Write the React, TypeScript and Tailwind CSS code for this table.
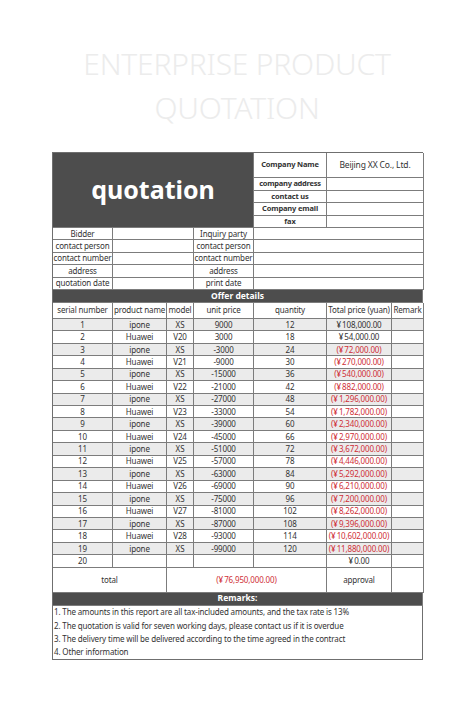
const font = { fontFamily: '"Noto Sans", "Open Sans", sans-serif' }

const rows = Array.from({ length: 19 }, (_, i) => {
  const n = i + 1
  const price = 9000 - 6000 * i
  const qty = 6 * (n + 1)
  return {
    n,
    product: n % 2 === 1 ? 'ipone' : 'Huawei',
    model: n % 2 === 1 ? 'XS' : `V${20 + (n / 2 - 1)}`,
    price,
    qty,
    total: price * qty,
  }
})

const money = (v: number) => {
  const s = '¥\u2009' + Math.abs(v).toLocaleString('en-US', { minimumFractionDigits: 2, maximumFractionDigits: 2 })
  return v < 0 ? `(${s})` : s
}

const Cell = ({ children, className = '' }: { children?: React.ReactNode; className?: string }) => (
  <div className={`flex items-center justify-center border-r border-b border-[#7c7c7c] whitespace-nowrap overflow-hidden ${className}`}>
    {children}
  </div>
)

export default function App() {
  return (
    <div className="w-[474px] h-[706px] bg-white text-[#333] overflow-hidden" style={font}>
      {/* Faded title */}
      <div className="pt-[42px] text-center text-[30px] leading-[44px] font-light text-[#ececec] tracking-[-0.2px]">
        <div>ENTERPRISE PRODUCT</div>
        <div>QUOTATION</div>
      </div>

      <div className="ml-[52px] mt-[22px] w-[371px] border-l border-t border-[#6f6f6f] text-[8px] leading-none tracking-[-0.15px]">
        {/* Company header */}
        <div className="grid grid-cols-[201px_73px_97px] grid-rows-[25px_12.5px_12.5px_12.5px_12.5px]">
          <div className="row-span-5 flex items-center justify-center bg-[#4d4d4d] border-r border-b border-[#7c7c7c] text-white font-bold text-[25px] tracking-normal pb-[2px]">
            quotation
          </div>
          <Cell className="font-bold text-[7.5px]">Company Name</Cell>
          <Cell className="text-[8.5px]">Beijing XX Co., Ltd.</Cell>
          <Cell className="font-bold text-[7.5px] tracking-[-0.25px]">company address</Cell>
          <Cell />
          <Cell className="font-bold text-[7.5px]">contact us</Cell>
          <Cell />
          <Cell className="font-bold text-[7.5px]">Company email</Cell>
          <Cell />
          <Cell className="font-bold text-[7.5px]">fax</Cell>
          <Cell />
        </div>

        {/* Bidder / inquiry party */}
        {[
          ['Bidder', 'Inquiry party'],
          ['contact person', 'contact person'],
          ['contact number', 'contact number'],
          ['address', 'address'],
          ['quotation date', 'print date'],
        ].map(([a, b]) => (
          <div key={a} className="grid grid-cols-[60px_81px_60px_170px] h-[12.4px]">
            <Cell>{a}</Cell>
            <Cell />
            <Cell>{b}</Cell>
            <Cell />
          </div>
        ))}

        {/* Offer details */}
        <Cell className="h-[13px] bg-[#4d4d4d] text-white font-bold text-[8.5px] tracking-normal">Offer details</Cell>

        <div className="grid grid-cols-[60px_54px_27px_60px_73px_65px_32px] h-[16px]">
          <Cell>serial number</Cell>
          <Cell>product name</Cell>
          <Cell>model</Cell>
          <Cell>unit price</Cell>
          <Cell>quantity</Cell>
          <Cell>Total price (yuan)</Cell>
          <Cell>Remark</Cell>
        </div>

        {rows.map((r) => (
          <div
            key={r.n}
            className={`grid grid-cols-[60px_54px_27px_60px_73px_65px_32px] h-[12.45px] ${r.n % 2 === 1 ? 'bg-[#ebebeb]' : 'bg-white'}`}
          >
            <Cell>{r.n}</Cell>
            <Cell>{r.product}</Cell>
            <Cell>{r.model}</Cell>
            <Cell>{r.price}</Cell>
            <Cell>{r.qty}</Cell>
            <Cell className={r.total < 0 ? 'text-[#cf2f37]' : ''}>{money(r.total)}</Cell>
            <Cell />
          </div>
        ))}
        <div className="grid grid-cols-[60px_54px_27px_60px_73px_65px_32px] h-[12.45px]">
          <Cell>20</Cell>
          <Cell />
          <Cell />
          <Cell />
          <Cell />
          <Cell>¥&thinsp;0.00</Cell>
          <Cell />
        </div>

        {/* Total */}
        <div className="grid grid-cols-[114px_160px_65px_32px] h-[25px]">
          <Cell>total</Cell>
          <Cell className="text-[#cf2f37]">(¥&thinsp;76,950,000.00)</Cell>
          <Cell>approval</Cell>
          <Cell />
        </div>

        {/* Remarks */}
        <Cell className="h-[13px] bg-[#4d4d4d] text-white font-bold text-[8.5px] tracking-normal">Remarks:</Cell>
        <div className="border-r border-b border-[#6f6f6f] pl-[1px]">
          {[
            '1. The amounts in this report are all tax-included amounts, and the tax rate is 13%',
            '2. The quotation is valid for seven working days, please contact us if it is overdue',
            '3. The delivery time will be delivered according to the time agreed in the contract',
            '4. Other information',
          ].map((t) => (
            <div key={t} className="h-[13.25px] flex items-center whitespace-nowrap">
              {t}
            </div>
          ))}
        </div>
      </div>
    </div>
  )
}
